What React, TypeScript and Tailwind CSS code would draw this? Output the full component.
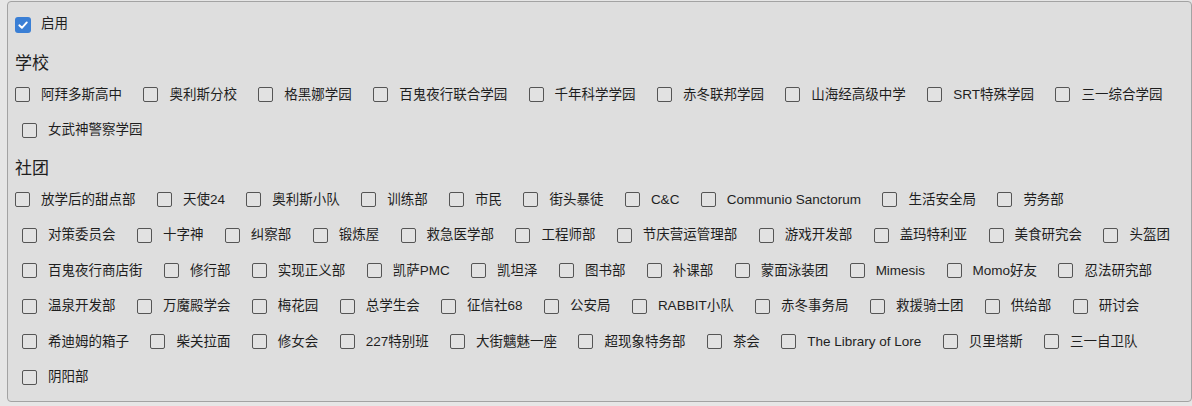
import React from "react";

const schoolRows: string[][] = [
  ["阿拜多斯高中", "奥利斯分校", "格黑娜学园", "百鬼夜行联合学园", "千年科学学园", "赤冬联邦学园", "山海经高级中学", "SRT特殊学园", "三一综合学园"],
  ["女武神警察学园"],
];

const clubRows: string[][] = [
  ["放学后的甜点部", "天使24", "奥利斯小队", "训练部", "市民", "街头暴徒", "C&C", "Communio Sanctorum", "生活安全局", "劳务部"],
  ["对策委员会", "十字神", "纠察部", "锻炼屋", "救急医学部", "工程师部", "节庆营运管理部", "游戏开发部", "盖玛特利亚", "美食研究会", "头盔团"],
  ["百鬼夜行商店街", "修行部", "实现正义部", "凯萨PMC", "凯坦泽", "图书部", "补课部", "蒙面泳装团", "Mimesis", "Momo好友", "忍法研究部"],
  ["温泉开发部", "万魔殿学会", "梅花园", "总学生会", "征信社68", "公安局", "RABBIT小队", "赤冬事务局", "救援骑士团", "供给部", "研讨会"],
  ["希迪姆的箱子", "柴关拉面", "修女会", "227特别班", "大街魑魅一座", "超现象特务部", "茶会", "The Library of Lore", "贝里塔斯", "三一自卫队"],
  ["阴阳部"],
];

const Box = ({ checked = false }: { checked?: boolean }) =>
  checked ? (
    <span className="flex h-[16px] w-[16px] shrink-0 items-center justify-center rounded-[3px] bg-[#3a7fd5]">
      <svg width="12" height="12" viewBox="0 0 12 12" fill="none">
        <path d="M2.3 6.3 L4.9 8.8 L9.8 3.4" stroke="#ffffff" strokeWidth="1.9" strokeLinecap="round" strokeLinejoin="round" />
      </svg>
    </span>
  ) : (
    <span className="h-[15px] w-[15px] shrink-0 rounded-[2px] border-[1.5px] border-[#555555] bg-[#e2e2e2]" />
  );

const Item = ({ label }: { label: string }) => (
  <label className="flex items-center">
    <Box />
    <span className="ml-[11px] whitespace-nowrap">{label}</span>
  </label>
);

const Group = ({ title, rows }: { title: string; rows: string[][] }) => (
  <div>
    <div className="flex h-[27px] items-center text-[17px]">{title}</div>
    {rows.map((row, i) => (
      <div key={i} className={`flex h-[35.5px] items-center gap-x-[21.4px] ${i > 0 ? "pl-[7px]" : ""}`}>
        {row.map((label) => (
          <Item key={label} label={label} />
        ))}
      </div>
    ))}
  </div>
);

export default function App() {
  return (
    <div
      className="h-[406px] w-[1192px] overflow-hidden bg-[#e6e6e6] pt-[1px] pl-[7px] text-[13.5px] text-[#1e1e1e]"
      style={{ fontFamily: '"Liberation Sans", "Noto Sans CJK SC", sans-serif' }}
    >
      <div className="h-[401px] w-[1185px] rounded-[4px] border border-[#a3a3a3] bg-[#dedede] pl-[7px] pt-[7px]">
        <label className="flex h-[31px] items-center">
          <Box checked />
          <span className="ml-[10px]">启用</span>
        </label>
        <div className="mt-[10px]">
          <Group title="学校" rows={schoolRows} />
        </div>
        <div className="mt-[7px]">
          <Group title="社团" rows={clubRows} />
        </div>
      </div>
    </div>
  );
}
